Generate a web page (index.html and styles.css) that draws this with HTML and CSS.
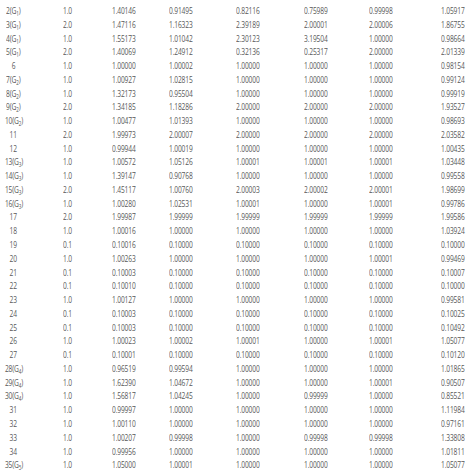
FILE: index.html
```html
<!DOCTYPE html>
<html>
<head>
<meta charset="utf-8">
<link rel="stylesheet" href="styles.css">
</head>
<body>
<div class="sheet">
<div class="row"><div class="id"><span>2(G<sub>1</sub>)</span></div><span>1.0</span><span>1.40146</span><span>0.91495</span><span>0.82116</span><span>0.75989</span><span>0.99998</span><span>1.05917</span></div>
<div class="row"><div class="id"><span>3(G<sub>1</sub>)</span></div><span>2.0</span><span>1.47116</span><span>1.16323</span><span>2.39189</span><span>2.00001</span><span>2.00006</span><span>1.86755</span></div>
<div class="row"><div class="id"><span>4(G<sub>1</sub>)</span></div><span>1.0</span><span>1.55173</span><span>1.01042</span><span>2.30123</span><span>3.19504</span><span>1.00000</span><span>0.98664</span></div>
<div class="row"><div class="id"><span>5(G<sub>1</sub>)</span></div><span>2.0</span><span>1.40069</span><span>1.24912</span><span>0.32136</span><span>0.25317</span><span>2.00000</span><span>2.01339</span></div>
<div class="row"><div class="id"><span>6</span></div><span>1.0</span><span>1.00000</span><span>1.00002</span><span>1.00000</span><span>1.00000</span><span>1.00000</span><span>0.98154</span></div>
<div class="row"><div class="id"><span>7(G<sub>2</sub>)</span></div><span>1.0</span><span>1.00927</span><span>1.02815</span><span>1.00000</span><span>1.00000</span><span>1.00000</span><span>0.99124</span></div>
<div class="row"><div class="id"><span>8(G<sub>2</sub>)</span></div><span>1.0</span><span>1.32173</span><span>0.95504</span><span>1.00000</span><span>1.00000</span><span>1.00000</span><span>0.99919</span></div>
<div class="row"><div class="id"><span>9(G<sub>2</sub>)</span></div><span>2.0</span><span>1.34185</span><span>1.18286</span><span>2.00000</span><span>2.00000</span><span>2.00000</span><span>1.93527</span></div>
<div class="row"><div class="id"><span>10(G<sub>2</sub>)</span></div><span>1.0</span><span>1.00477</span><span>1.01393</span><span>1.00000</span><span>1.00000</span><span>1.00000</span><span>0.98693</span></div>
<div class="row"><div class="id"><span>11</span></div><span>2.0</span><span>1.99973</span><span>2.00007</span><span>2.00000</span><span>2.00000</span><span>2.00000</span><span>2.03582</span></div>
<div class="row"><div class="id"><span>12</span></div><span>1.0</span><span>0.99944</span><span>1.00019</span><span>1.00000</span><span>1.00000</span><span>1.00000</span><span>1.00435</span></div>
<div class="row"><div class="id"><span>13(G<sub>3</sub>)</span></div><span>1.0</span><span>1.00572</span><span>1.05126</span><span>1.00001</span><span>1.00001</span><span>1.00001</span><span>1.03448</span></div>
<div class="row"><div class="id"><span>14(G<sub>3</sub>)</span></div><span>1.0</span><span>1.39147</span><span>0.90768</span><span>1.00000</span><span>1.00000</span><span>1.00000</span><span>0.99558</span></div>
<div class="row"><div class="id"><span>15(G<sub>3</sub>)</span></div><span>2.0</span><span>1.45117</span><span>1.00760</span><span>2.00003</span><span>2.00002</span><span>2.00001</span><span>1.98699</span></div>
<div class="row"><div class="id"><span>16(G<sub>3</sub>)</span></div><span>1.0</span><span>1.00280</span><span>1.02531</span><span>1.00001</span><span>1.00000</span><span>1.00001</span><span>0.99786</span></div>
<div class="row"><div class="id"><span>17</span></div><span>2.0</span><span>1.99987</span><span>1.99999</span><span>1.99999</span><span>1.99999</span><span>1.99999</span><span>1.99586</span></div>
<div class="row"><div class="id"><span>18</span></div><span>1.0</span><span>1.00016</span><span>1.00000</span><span>1.00000</span><span>1.00000</span><span>1.00000</span><span>1.03924</span></div>
<div class="row"><div class="id"><span>19</span></div><span>0.1</span><span>0.10016</span><span>0.10000</span><span>0.10000</span><span>0.10000</span><span>0.10000</span><span>0.10000</span></div>
<div class="row"><div class="id"><span>20</span></div><span>1.0</span><span>1.00263</span><span>1.00000</span><span>1.00000</span><span>1.00000</span><span>1.00001</span><span>0.99469</span></div>
<div class="row"><div class="id"><span>21</span></div><span>0.1</span><span>0.10003</span><span>0.10000</span><span>0.10000</span><span>0.10000</span><span>0.10000</span><span>0.10007</span></div>
<div class="row"><div class="id"><span>22</span></div><span>0.1</span><span>0.10010</span><span>0.10000</span><span>0.10000</span><span>0.10000</span><span>0.10000</span><span>0.10000</span></div>
<div class="row"><div class="id"><span>23</span></div><span>1.0</span><span>1.00127</span><span>1.00000</span><span>1.00000</span><span>1.00000</span><span>1.00000</span><span>0.99581</span></div>
<div class="row"><div class="id"><span>24</span></div><span>0.1</span><span>0.10003</span><span>0.10000</span><span>0.10000</span><span>0.10000</span><span>0.10000</span><span>0.10025</span></div>
<div class="row"><div class="id"><span>25</span></div><span>0.1</span><span>0.10003</span><span>0.10000</span><span>0.10000</span><span>0.10000</span><span>0.10000</span><span>0.10492</span></div>
<div class="row"><div class="id"><span>26</span></div><span>1.0</span><span>1.00023</span><span>1.00002</span><span>1.00001</span><span>1.00000</span><span>1.00001</span><span>1.05077</span></div>
<div class="row"><div class="id"><span>27</span></div><span>0.1</span><span>0.10001</span><span>0.10000</span><span>0.10000</span><span>0.10000</span><span>0.10000</span><span>0.10120</span></div>
<div class="row"><div class="id"><span>28(G<sub>4</sub>)</span></div><span>1.0</span><span>0.96519</span><span>0.99594</span><span>1.00000</span><span>1.00000</span><span>1.00000</span><span>1.01865</span></div>
<div class="row"><div class="id"><span>29(G<sub>4</sub>)</span></div><span>1.0</span><span>1.62390</span><span>1.04672</span><span>1.00000</span><span>1.00000</span><span>1.00001</span><span>0.90507</span></div>
<div class="row"><div class="id"><span>30(G<sub>4</sub>)</span></div><span>1.0</span><span>1.56817</span><span>1.04245</span><span>1.00000</span><span>0.99999</span><span>1.00000</span><span>0.85521</span></div>
<div class="row"><div class="id"><span>31</span></div><span>1.0</span><span>0.99997</span><span>1.00000</span><span>1.00000</span><span>1.00000</span><span>1.00000</span><span>1.11984</span></div>
<div class="row"><div class="id"><span>32</span></div><span>1.0</span><span>1.00110</span><span>1.00000</span><span>1.00000</span><span>1.00000</span><span>1.00000</span><span>0.97161</span></div>
<div class="row"><div class="id"><span>33</span></div><span>1.0</span><span>1.00207</span><span>0.99998</span><span>1.00000</span><span>0.99998</span><span>0.99998</span><span>1.33808</span></div>
<div class="row"><div class="id"><span>34</span></div><span>1.0</span><span>0.99956</span><span>1.00000</span><span>1.00000</span><span>1.00000</span><span>1.00000</span><span>1.01811</span></div>
<div class="row"><div class="id"><span>35(G<sub>5</sub>)</span></div><span>1.0</span><span>1.05000</span><span>1.00001</span><span>1.00000</span><span>1.00000</span><span>1.00000</span><span>1.05077</span></div>
</div>
</body>
</html>
```

FILE: styles.css
```css
html, body {
  margin: 0;
  padding: 0;
  background: #ffffff;
}

body {
  width: 474px;
  height: 474px;
  overflow: hidden;
}

.sheet {
  width: 474px;
  padding-top: 4px;
  font-family: "Open Sans", "Noto Sans", sans-serif;
  font-size: 9.5px;
  letter-spacing: -0.2px;
  color: #585858;
}

.row {
  display: grid;
  grid-template-columns: 63px 49px 57px 67px 68px 65px 72px 33px;
  height: 13.78px;
  line-height: 13.78px;
  white-space: nowrap;
}

.row > span {
  display: inline-block;
  transform: scaleX(0.7);
  transform-origin: 0 50%;
}

.row .id {
  width: 27px;
  display: flex;
  justify-content: center;
}

.row .id > span {
  display: inline-block;
  transform: scaleX(0.7);
  transform-origin: 50% 50%;
}

sub {
  font-size: 0.68em;
  line-height: 0;
  vertical-align: -0.25em;
}
```
